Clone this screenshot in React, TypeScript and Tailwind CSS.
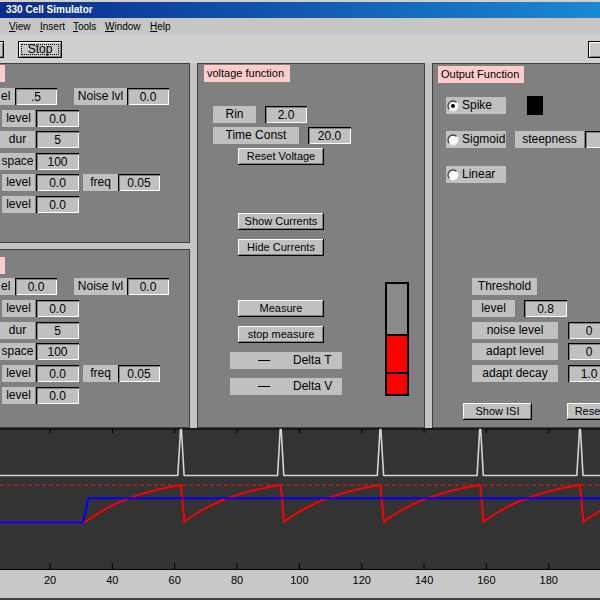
import React from "react";

type P = { className?: string; children?: React.ReactNode };

const cx = (...a: (string | false | undefined)[]) => a.filter(Boolean).join(" ");

function Lbl({ className, children, left }: P & { left?: boolean }) {
  return (
    <div
      className={cx(
        "flex h-[17px] shrink-0 items-center overflow-hidden whitespace-nowrap bg-[#c0c0c0] pb-[1px] text-[12px] leading-none",
        left ? "justify-start" : "justify-center",
        className
      )}
    >
      {children}
    </div>
  );
}

function Edit({ className, children }: P) {
  return (
    <div
      className={cx(
        "flex h-[17px] shrink-0 items-center justify-center overflow-hidden whitespace-nowrap bg-[#c0c0c0] pt-[1px] text-[12px] leading-none shadow-[inset_1px_1px_0_#000,inset_2px_2px_0_#808080,inset_-1px_-1px_0_#fff]",
        className
      )}
    >
      {children}
    </div>
  );
}

function Btn({ className, children }: P) {
  return (
    <button
      type="button"
      className={cx(
        "flex h-[17px] shrink-0 items-center justify-center whitespace-nowrap bg-[#c0c0c0] pb-[1px] text-[11px] leading-none shadow-[inset_-1px_-1px_0_#000,inset_1px_1px_0_#fff,inset_-2px_-2px_0_#808080]",
        className
      )}
    >
      {children}
    </button>
  );
}

function Pink({ className, children }: P) {
  return (
    <div
      className={cx(
        "flex h-[17px] shrink-0 items-center whitespace-nowrap bg-[#ffcccc] pb-[1px] pl-[3px] text-[11px] leading-none",
        className
      )}
    >
      {children}
    </div>
  );
}

function Radio({ label, checked, className }: { label: string; checked?: boolean; className?: string }) {
  return (
    <div className={cx("flex h-[17px] w-[60px] shrink-0 items-center bg-[#c0c0c0] text-[12px] leading-none", className)}>
      <svg width="12" height="12" viewBox="0 0 12 12" className="ml-[1px] shrink-0">
        <circle cx="6" cy="6" r="5" fill="#fff" />
        <path d="M2.46 9.54 A5 5 0 0 1 9.54 2.46" fill="none" stroke="#404040" strokeWidth="1.3" />
        <path d="M9.54 2.46 A5 5 0 0 1 2.46 9.54" fill="none" stroke="#e8e8e8" strokeWidth="1.3" />
        {checked && <circle cx="6" cy="6" r="2" fill="#000" />}
      </svg>
      <span className="ml-[3px] pb-[1px]">{label}</span>
    </div>
  );
}

function StimRows({ first }: { first: string }) {
  return (
    <>
      <div className="flex">
        <Lbl left className="w-[15px] pl-[1px]">el</Lbl>
        <Edit className="w-[42px]">{first}</Edit>
        <Lbl className="ml-[17px] w-[53px]">Noise lvl</Lbl>
        <Edit className="w-[42px]">0.0</Edit>
      </div>
      <div className="flex">
        <Lbl className="ml-[2px] w-[33px]">level</Lbl>
        <Edit className="ml-[1px] w-[43px]">0.0</Edit>
      </div>
      <div className="flex">
        <Lbl className="w-[35px]">dur</Lbl>
        <Edit className="ml-[1px] w-[43px]">5</Edit>
      </div>
      <div className="flex">
        <Lbl className="w-[35px]">space</Lbl>
        <Edit className="ml-[1px] w-[43px]">100</Edit>
      </div>
      <div className="flex">
        <Lbl className="ml-[2px] w-[33px]">level</Lbl>
        <Edit className="ml-[1px] w-[43px]">0.0</Edit>
        <Lbl className="ml-[4px] w-[35px]">freq</Lbl>
        <Edit className="w-[42px]">0.05</Edit>
      </div>
      <div className="flex">
        <Lbl className="ml-[2px] w-[33px]">level</Lbl>
        <Edit className="ml-[1px] w-[43px]">0.0</Edit>
      </div>
    </>
  );
}

function Meter() {
  return (
    <div className="ml-[43px] flex h-[114px] w-[24px] shrink-0 flex-col border-2 border-black">
      <div className="h-[50px] bg-[#8a8a8a]" />
      <div className="h-[38px] border-t-2 border-black bg-[#ff0000]" />
      <div className="flex-1 border-t-2 border-black bg-[#ff0000]" />
    </div>
  );
}

function Plot() {
  const X = (t: number) => -12.3 + 3.117 * t;
  const V = (t: number, s: number) => 47 + 47 * Math.exp(-(t - s) / 20);
  const starts = [31.3, 63, 95, 127, 159, 191];
  let red = `M${X(-5)} 94 L${X(31.3).toFixed(1)} 94`;
  let spikes = `M0 47.5`;
  starts.forEach((s, i) => {
    const p = 62 + 32 * i;
    for (let t = s; t < p; t += 0.5) red += ` L${X(t).toFixed(1)} ${V(t, s).toFixed(1)}`;
    red += ` L${X(p).toFixed(1)} ${V(p, s).toFixed(1)} L${X(p + 1.1).toFixed(1)} 94`;
    spikes += ` L${X(p - 1).toFixed(1)} 47.5 L${X(p - 0.15).toFixed(1)} 1.5 L${X(p + 0.15).toFixed(1)} 1.5 L${X(p + 1).toFixed(1)} 47.5`;
  });
  spikes += " L600 47.5";
  const ticks = [20, 40, 60, 80, 100, 120, 140, 160, 180];

  return (
    <svg width="600" height="172" viewBox="0 0 600 172" className="block shrink-0">
      <rect x="0" y="0" width="600" height="142" fill="#333333" />
      <rect x="0" y="142" width="600" height="30" fill="#c8c8c8" />
      <rect x="0" y="170" width="600" height="2" fill="#404040" />
      <line x1="0" y1="1" x2="600" y2="1" stroke="#000" strokeWidth="1.2" />
      <line x1="0" y1="141.5" x2="600" y2="141.5" stroke="#000" strokeWidth="1.2" />
      {ticks.map((t) => (
        <g key={t}>
          <line x1={X(t)} y1="1" x2={X(t)} y2="5" stroke="#000" strokeWidth="1" />
          <line x1={X(t)} y1="135" x2={X(t)} y2="141" stroke="#000" strokeWidth="1" />
          <text
            x={X(t)}
            y="155.5"
            textAnchor="middle"
            fontSize="11"
            fontFamily="'Liberation Sans', Arial, sans-serif"
            fill="#000"
          >
            {t}
          </text>
        </g>
      ))}
      <path d={spikes} fill="none" stroke="#d4d4d4" strokeWidth="1.6" strokeLinejoin="round" />
      <line x1="0" y1="57" x2="600" y2="57" stroke="#e02020" strokeWidth="1" strokeDasharray="4 3" />
      <path d={red} fill="none" stroke="#ff0000" strokeWidth="2" strokeLinejoin="round" />
      <path
        d={`M0 94.3 L${X(30.6).toFixed(1)} 94.3 L${X(32.3).toFixed(1)} 70.3 L600 70.3`}
        fill="none"
        stroke="#0000ff"
        strokeWidth="2"
      />
    </svg>
  );
}

export default function App() {
  return (
    <div className="flex h-[600px] w-[600px] flex-col overflow-hidden bg-[#c4c4c4] font-['Liberation_Sans',Arial,sans-serif] text-black">
      {/* title bar */}
      <div className="flex h-[18px] shrink-0 items-center border-t-2 border-[#d4d0c8] bg-[linear-gradient(to_right,#0a2c8c,#1a88d2)] pl-[6px]">
        <span className="whitespace-nowrap text-[10px] font-bold leading-none text-white">330 Cell Simulator</span>
      </div>

      {/* menu */}
      <div className="flex h-[17px] shrink-0 items-center bg-[#c6c6c6] pl-[9px] text-[10px] leading-none">
        <span className="w-[31px]">
          <span className="underline underline-offset-1">V</span>iew
        </span>
        <span className="w-[33px]">
          <span className="underline underline-offset-1">I</span>nsert
        </span>
        <span className="w-[32px]">
          <span className="underline underline-offset-1">T</span>ools
        </span>
        <span className="w-[45px]">
          <span className="underline underline-offset-1">W</span>indow
        </span>
        <span>
          <span className="underline underline-offset-1">H</span>elp
        </span>
      </div>

      {/* toolbar */}
      <div className="flex h-[28px] shrink-0 bg-[#cfcfcf] pt-[6px]">
        <div className="-ml-[40px] h-[17px] w-[44px] shrink-0 border border-black bg-[#c8c8c8] shadow-[inset_1px_1px_0_#fff,inset_-1px_-1px_0_#808080]" />
        <button
          type="button"
          className="ml-[14px] flex h-[17px] w-[44px] shrink-0 border border-black bg-[#c8c8c8] p-[2px] shadow-[inset_1px_1px_0_#fff,inset_-1px_-1px_0_#808080]"
        >
          <span className="flex flex-1 items-center justify-center border border-dotted border-black pb-[1px] text-[12px] leading-none">
            Stop
          </span>
        </button>
        <div className="ml-[526px] h-[17px] w-[44px] shrink-0 border border-black bg-[#c8c8c8] shadow-[inset_1px_1px_0_#fff,inset_-1px_-1px_0_#808080]" />
      </div>

      {/* panels */}
      <div className="flex h-[365px] shrink-0">
        <div className="flex w-[190px] shrink-0 flex-col gap-[6px]">
          <div className="flex h-[180px] flex-col border border-l-0 border-[#404040] bg-[#808080]">
            <div className="mt-[1px] h-[17px] w-[5px] bg-[#ffcccc]" />
            <div className="mt-[6px] flex flex-col gap-[4.6px]">
              <StimRows first=".5" />
            </div>
          </div>
          <div className="flex h-[179px] flex-col border border-l-0 border-[#404040] bg-[#808080]">
            <div className="mt-[7px] h-[17px] w-[5px] bg-[#ffcccc]" />
            <div className="mt-[4px] flex flex-col gap-[4.8px]">
              <StimRows first="0.0" />
            </div>
          </div>
        </div>

        <div className="ml-[7px] flex w-[228px] shrink-0 flex-col border border-[#404040] bg-[#808080]">
          <Pink className="ml-[6px] mt-[1px] w-[86px]">voltage function</Pink>
          <div className="mt-[24px] flex">
            <Lbl className="ml-[15px] w-[43px]">Rin</Lbl>
            <Edit className="ml-[9px] w-[42px]">2.0</Edit>
          </div>
          <div className="mt-[4px] flex">
            <Lbl className="ml-[15px] w-[86px]">Time Const</Lbl>
            <Edit className="ml-[9px] w-[43px]">20.0</Edit>
          </div>
          <Btn className="ml-[40px] mt-[4px] w-[86px]">Reset Voltage</Btn>
          <Btn className="ml-[40px] mt-[48px] w-[86px]">Show Currents</Btn>
          <Btn className="ml-[40px] mt-[9px] w-[86px]">Hide Currents</Btn>
          <div className="mt-[26px] flex items-start">
            <div className="ml-[32px] flex w-[112px] shrink-0 flex-col pt-[18px]">
              <Btn className="ml-[8px] w-[86px]">Measure</Btn>
              <Btn className="ml-[8px] mt-[9px] w-[86px]">stop measure</Btn>
              <Lbl left className="mt-[9px] w-[112px]">
                <span className="ml-[28px]">—</span>
                <span className="ml-[23px]">Delta T</span>
              </Lbl>
              <Lbl left className="mt-[9px] w-[112px]">
                <span className="ml-[28px]">—</span>
                <span className="ml-[23px]">Delta V</span>
              </Lbl>
            </div>
            <Meter />
          </div>
        </div>

        <div className="ml-[7px] flex w-[200px] shrink-0 flex-col border border-r-0 border-[#404040] bg-[#808080]">
          <Pink className="ml-[5px] mt-[2px] w-[86px]">Output Function</Pink>
          <div className="mt-[14px] flex items-start">
            <Radio className="ml-[13px]" checked label="Spike" />
            <div className="-mt-[1px] ml-[21px] h-[19px] w-[16px] shrink-0 bg-black" />
          </div>
          <div className="mt-[16px] flex">
            <Radio className="ml-[13px]" label="Sigmoid" />
            <Lbl className="ml-[9px] w-[69px]">steepness</Lbl>
            <Edit className="ml-[1px] w-[42px]"> </Edit>
          </div>
          <div className="mt-[18px] flex">
            <Radio className="ml-[13px]" label="Linear" />
          </div>
          <Lbl className="ml-[39px] mt-[95px] w-[65px]">Threshold</Lbl>
          <div className="mt-[5px] flex">
            <Lbl className="ml-[39px] w-[43px]">level</Lbl>
            <Edit className="ml-[9px] w-[43px]">0.8</Edit>
          </div>
          <div className="mt-[5px] flex">
            <Lbl className="ml-[39px] w-[86px]">noise level</Lbl>
            <Edit className="ml-[10px] w-[42px]">0</Edit>
          </div>
          <div className="mt-[4px] flex">
            <Lbl className="ml-[39px] w-[86px]">adapt level</Lbl>
            <Edit className="ml-[10px] w-[42px]">0</Edit>
          </div>
          <div className="mt-[5px] flex">
            <Lbl className="ml-[39px] w-[86px]">adapt decay</Lbl>
            <Edit className="ml-[10px] w-[42px]">1.0</Edit>
          </div>
          <div className="mt-[21px] flex">
            <Btn className="ml-[30px] w-[69px]">Show ISI</Btn>
            <Btn className="ml-[35px] w-[44px]">Reset</Btn>
          </div>
        </div>
      </div>

      <Plot />
    </div>
  );
}
